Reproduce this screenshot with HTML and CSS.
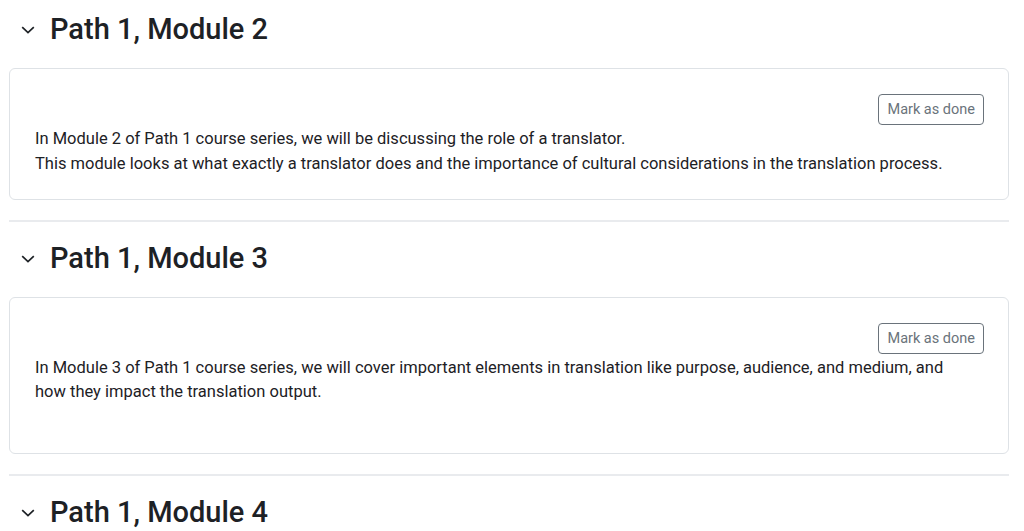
FILE: index.html
```html
<!DOCTYPE html>
<html lang="en">
<head>
<meta charset="utf-8">
<title>Path 1 modules</title>
<link rel="stylesheet" href="styles.css">
</head>
<body>
<div class="course">
  <section class="module">
    <div class="module-head">
      <svg class="chevron" viewBox="0 0 14 8" width="14" height="8" aria-hidden="true"><path d="M1.2 1.2 7 6.6 12.8 1.2" fill="none" stroke="#1d2125" stroke-width="1.7"/></svg>
      <h3 class="module-title">Path 1, Module 2</h3>
    </div>
    <div class="card">
      <div class="card-actions"><button class="btn-done">Mark as done</button></div>
      <div class="card-text">
        <p>In Module 2 of Path 1 course series, we will be discussing the role of a translator.<br>This module looks at what exactly a translator does and the importance of cultural considerations in the translation process.</p>
      </div>
    </div>
  </section>
  <section class="module">
    <div class="module-head">
      <svg class="chevron" viewBox="0 0 14 8" width="14" height="8" aria-hidden="true"><path d="M1.2 1.2 7 6.6 12.8 1.2" fill="none" stroke="#1d2125" stroke-width="1.7"/></svg>
      <h3 class="module-title">Path 1, Module 3</h3>
    </div>
    <div class="card card-tall">
      <div class="card-actions"><button class="btn-done">Mark as done</button></div>
      <div class="card-text">
        <p>In Module 3 of Path 1 course series, we will cover important elements in translation like purpose, audience, and medium, and how they impact the translation output.</p>
      </div>
    </div>
  </section>
  <section class="module">
    <div class="module-head">
      <svg class="chevron" viewBox="0 0 14 8" width="14" height="8" aria-hidden="true"><path d="M1.2 1.2 7 6.6 12.8 1.2" fill="none" stroke="#1d2125" stroke-width="1.7"/></svg>
      <h3 class="module-title">Path 1, Module 4</h3>
    </div>
  </section>
</div>
</body>
</html>
```
FILE: styles.css
```css
* { box-sizing: border-box; }
html, body { margin: 0; padding: 0; background: #fff; }
body {
  font-family: Roboto, "Liberation Sans", Arial, sans-serif;
  color: #1d2125;
  overflow: hidden;
}
.course {
  margin-left: 9px;
  width: 1000px;
}
.module {
  padding-bottom: 20px;
  border-bottom: 2px solid #e9ebee;
  margin-bottom: 16px;
}
.module:first-child { padding-top: 9px; }
.module-head {
  display: flex;
  align-items: center;
  height: 40px;
  padding-left: 12px;
}
.chevron { flex: none; margin-right: 15px; margin-top: 2px; }
.module-title {
  margin: 0;
  font-size: 29px;
  font-weight: 500;
  line-height: 40px;
}
.card {
  margin-top: 19px;
  border: 1px solid #dee2e6;
  border-radius: 6px;
  padding: 25px 24px 22px 25px;
}
.card-tall { padding-bottom: 48px; }
.card-actions {
  display: flex;
  justify-content: flex-end;
}
.btn-done {
  font-family: Roboto, "Liberation Sans", Arial, sans-serif;
  font-size: 14.5px;
  color: #6a737b;
  background: #fff;
  border: 1px solid #6a737b;
  border-radius: 4px;
  height: 31px;
  padding: 0 8px;
  line-height: 29px;
}
.card-text { padding-top: 2px; }
.card-text p {
  margin: 0;
  font-size: 16.5px;
  line-height: 1.5;
  max-width: 922px;
}
```
